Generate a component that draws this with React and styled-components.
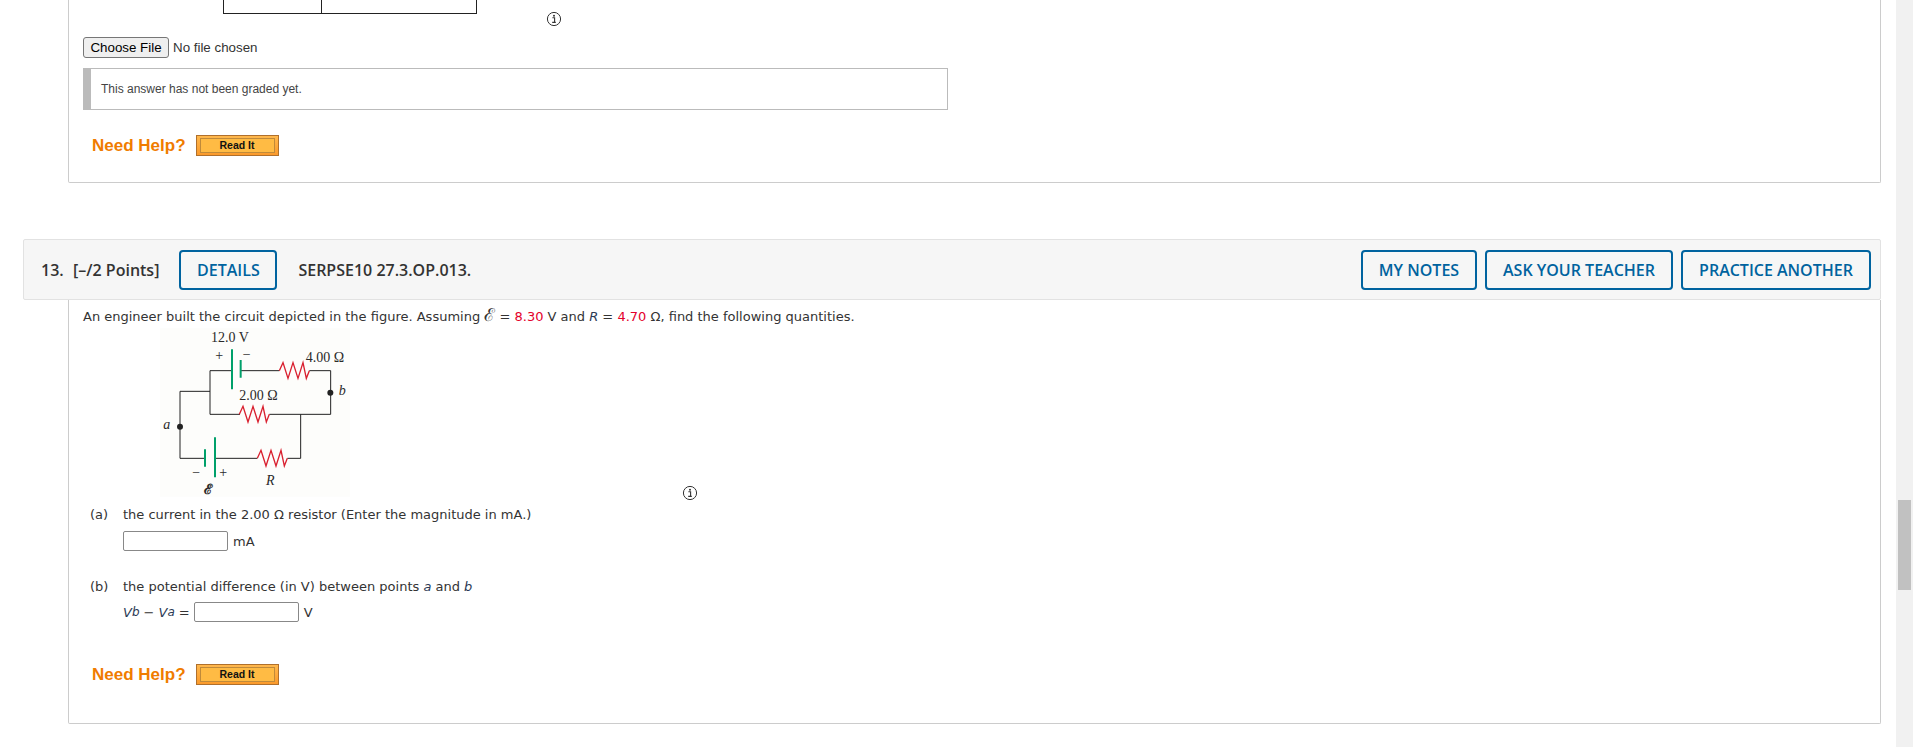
import styled, { createGlobalStyle } from 'styled-components';

const GlobalStyle = createGlobalStyle`
  html, body {
    margin: 0;
    height: 100%;
    overflow: hidden;
    background: #fff;
  }
  #root {
    height: 100%;
  }
`;

const Page = styled.div`
  display: flex;
  height: 747px;
  overflow: hidden;
`;

const Content = styled.main`
  flex: 1;
  min-width: 0;
  padding: 0 15px 0 23px;
`;

const Scrollbar = styled.div`
  width: 17px;
  flex: none;
  background: #f1f1f1;
  padding: 500px 2px 0 2px;
  box-sizing: border-box;
`;

const Thumb = styled.div`
  height: 90px;
  background: #c1c1c1;
`;

const Body = styled.section`
  margin-left: 45px;
  box-sizing: border-box;
  height: ${(p) => p.$height}px;
  border: 1px solid #ccc;
  border-top: none;
  padding-left: 14px;
  border-radius: ${(p) => (p.$last ? '0 0 2px 2px' : '0 0 2px 2px')};
`;

const TableRow = styled.div`
  display: flex;
  height: 37px;
`;

const TableBit = styled.div`
  margin-left: 140px;
  width: 254px;
  height: 14px;
  box-sizing: border-box;
  display: grid;
  grid-template-columns: 97px 1fr;
  border: 1px solid #222;
  border-top: none;
`;

const TableCell = styled.div`
  & + & {
    border-left: 1px solid #222;
  }
`;

const InfoWrap = styled.span`
  display: inline-flex;
  margin-left: 69px;
  margin-top: 11px;
  height: 16px;
`;

const FileRow = styled.div`
  display: flex;
  align-items: center;
  height: 21px;
  font: 13.33px 'Liberation Sans', Arial, sans-serif;
  color: #333;
`;

const FileButton = styled.button`
  box-sizing: border-box;
  width: 86px;
  height: 21px;
  padding: 0;
  margin-right: 4px;
  border: 1px solid #767676;
  border-radius: 3px;
  background: #efefef;
  color: #000;
  font: inherit;
`;

const Alert = styled.div`
  box-sizing: border-box;
  width: 865px;
  height: 42px;
  margin-top: 10px;
  padding-left: 10px;
  display: flex;
  align-items: center;
  border: 1px solid #bbb;
  border-left: 8px solid #bbb;
  font: 12px 'Liberation Sans', Arial, sans-serif;
  color: #444;
`;

const HelpRow = styled.div`
  display: flex;
  align-items: center;
  gap: 10px;
  margin-top: ${(p) => p.$top}px;
  margin-left: 9px;
`;

const HelpLabel = styled.span`
  font: bold 17px 'Liberation Sans', Arial, sans-serif;
  color: #f07c00;
`;

const ReadIt = styled.button`
  box-sizing: border-box;
  width: 83px;
  height: 21px;
  padding: 2px 3px;
  border: 1px solid #b0702c;
  background: linear-gradient(#ffb84d, #fb9a2b);
  display: flex;
`;

const ReadItLabel = styled.span`
  flex: 1;
  border: 1px solid #c08a3a;
  background: #ffbb44;
  color: #111;
  font: bold 10.5px/13px 'Liberation Sans', Arial, sans-serif;
  text-align: center;
`;

const QuestionHead = styled.header`
  box-sizing: border-box;
  height: 61px;
  margin-top: 56px;
  padding: 0 9px 0 17px;
  display: flex;
  align-items: center;
  background: #f6f6f6;
  border: 1px solid #e2e2e2;
  border-radius: 2px;
  font: 600 16px 'Open Sans', sans-serif;
  color: #333;
`;

const Number = styled.span`
  width: 32px;
`;

const Points = styled.span`
  margin-right: 20px;
`;

const Code = styled.span`
  margin-left: 21px;
  margin-right: auto;
`;

const OutlineButton = styled.button`
  box-sizing: border-box;
  height: 40px;
  width: ${(p) => p.$width}px;
  margin-left: ${(p) => p.$gap || 0}px;
  padding: 0;
  border: 2px solid #00639f;
  border-radius: 4px;
  background: transparent;
  color: #00639f;
  font: 600 16px 'Open Sans', sans-serif;
`;

const Prose = styled.div`
  font: 13px/17px 'DejaVu Sans', Verdana, sans-serif;
  color: #333;
`;

const Intro = styled(Prose)`
  padding-top: 6px;
  height: 15px;
`;

const Value = styled.span`
  color: #e4002b;
`;

const Var = styled.i`
  color: #2b3a55;
`;

const Script = styled.span`
  font: 18px 'DejaVu Serif', serif;
  line-height: 1;
`;

const FigureRow = styled.div`
  display: flex;
  height: 186px;
  margin-top: -1px;
  margin-left: 67px;
`;

const FigureInfo = styled.span`
  display: inline-flex;
  margin-left: 312px;
  margin-top: 165px;
  height: 16px;
`;

const Part = styled(Prose)`
  display: grid;
  grid-template-columns: 33px 1fr;
  margin-left: 7px;
  margin-top: ${(p) => p.$top}px;
`;

const Answer = styled.div`
  grid-column: 2;
  display: flex;
  align-items: center;
  height: 20px;
  margin-top: ${(p) => p.$top}px;
`;

const Field = styled.input`
  box-sizing: border-box;
  width: 105px;
  height: 20px;
  padding: 0;
  margin: 0 5px 0 ${(p) => p.$left || 0}px;
  border: 1px solid #888;
  border-radius: 2px;
  background: #fff;
`;

const Sub = styled.sub`
  font-size: 12px;
  line-height: 0;
  margin-right: 4px;
`;

function InfoIcon() {
  return (
    <svg width="16" height="16" viewBox="0 0 16 16">
      <circle cx="8" cy="8" r="6.6" fill="none" stroke="#333" strokeWidth="1" />
      <circle cx="8" cy="4.7" r="1" fill="#333" />
      <path d="M6.4 6.8H8.6V11.4H9.8M6.2 11.4H9.8" fill="none" stroke="#333" strokeWidth="1.1" />
    </svg>
  );
}

const zig = (x, y, pts) =>
  pts.reduce((d, [dx, dy]) => `${d} L${x + dx} ${y + dy}`, `M${x} ${y}`);

const ZIGZAG = [
  [11, -24], [26, 23], [41, -24], [56, 23], [71, -24], [81, 23], [90, 0],
];

const Label = styled.text`
  font-family: 'Liberation Serif', 'DejaVu Serif', serif;
  font-size: 42px;
  fill: #2a2a2a;
`;

function Circuit() {
  return (
    <svg width="220" height="180" viewBox="0 0 660 540" style={{ flex: 'none' }}>
      <rect x="30" y="25" width="570" height="505" fill="#fdfdfb" />
      <path
        d="M245 152H180V283H270M358 283H542V152H478M388 152H272M180 214H90V415H165M195 415H322M412 415H452V283"
        fill="none"
        stroke="#222"
        strokeWidth="3"
      />
      <path
        d="M246 88V208M272 120V173M165 388V440M195 352V472"
        fill="none"
        stroke="#00a06a"
        strokeWidth="6"
      />
      <g fill="none" stroke="#d9202f" strokeWidth="4">
        <path d={zig(388, 152, ZIGZAG)} />
        <path d={zig(268, 283, ZIGZAG)} />
        <path d={zig(322, 415, ZIGZAG)} />
      </g>
      <circle cx="90" cy="320" r="9" fill="#222" />
      <circle cx="541" cy="218" r="9" fill="#222" />
      <Label x="183" y="66">12.0 V</Label>
      <Label x="196" y="120">+</Label>
      <Label x="278" y="118">−</Label>
      <Label x="467" y="127">4.00 Ω</Label>
      <Label x="268" y="241">2.00 Ω</Label>
      <Label x="566" y="226" fontStyle="italic">b</Label>
      <Label x="40" y="328" fontStyle="italic">a</Label>
      <Label x="127" y="470">−</Label>
      <Label x="208" y="470">+</Label>
      <Label x="348" y="494" fontStyle="italic">R</Label>
      <Label x="162" y="522" fontWeight="bold">ℰ</Label>
    </svg>
  );
}

export default function App() {
  return (
    <Page>
      <GlobalStyle />
      <Content>
        <Body $height={183}>
          <TableRow>
            <TableBit>
              <TableCell />
              <TableCell />
            </TableBit>
            <InfoWrap>
              <InfoIcon />
            </InfoWrap>
          </TableRow>
          <FileRow>
            <FileButton type="button">Choose File</FileButton>
            No file chosen
          </FileRow>
          <Alert>This answer has not been graded yet.</Alert>
          <HelpRow $top={25}>
            <HelpLabel>Need Help?</HelpLabel>
            <ReadIt type="button">
              <ReadItLabel>Read It</ReadItLabel>
            </ReadIt>
          </HelpRow>
        </Body>

        <QuestionHead>
          <Number>13.</Number>
          <Points>[–/2 Points]</Points>
          <OutlineButton $width={98}>DETAILS</OutlineButton>
          <Code>SERPSE10 27.3.OP.013.</Code>
          <OutlineButton $width={116}>MY NOTES</OutlineButton>
          <OutlineButton $width={188} $gap={8}>ASK YOUR TEACHER</OutlineButton>
          <OutlineButton $width={190} $gap={8}>PRACTICE ANOTHER</OutlineButton>
        </QuestionHead>
        <Body $height={424}>
          <Intro>
            An engineer built the circuit depicted in the figure. Assuming <Script>ℰ</Script> ={' '}
            <Value>8.30</Value> V and <Var>R</Var> = <Value>4.70</Value> Ω, find the following
            quantities.
          </Intro>
          <FigureRow>
            <Circuit />
            <FigureInfo>
              <InfoIcon />
            </FigureInfo>
          </FigureRow>
          <Part $top={0}>
            <span>(a)</span>
            <span>the current in the 2.00 Ω resistor (Enter the magnitude in mA.)</span>
            <Answer $top={8}>
              <Field />
              mA
            </Answer>
          </Part>
          <Part $top={27}>
            <span>(b)</span>
            <span>
              the potential difference (in V) between points <Var>a</Var> and <Var>b</Var>
            </span>
            <Answer $top={7}>
              <Var>V</Var>
              <Sub><Var>b</Var></Sub>− <Var>&nbsp;V</Var>
              <Sub><Var>a</Var></Sub>=
              <Field $left={4} />
              V
            </Answer>
          </Part>
          <HelpRow $top={42}>
            <HelpLabel>Need Help?</HelpLabel>
            <ReadIt type="button">
              <ReadItLabel>Read It</ReadItLabel>
            </ReadIt>
          </HelpRow>
        </Body>
      </Content>
      <Scrollbar>
        <Thumb />
      </Scrollbar>
    </Page>
  );
}
